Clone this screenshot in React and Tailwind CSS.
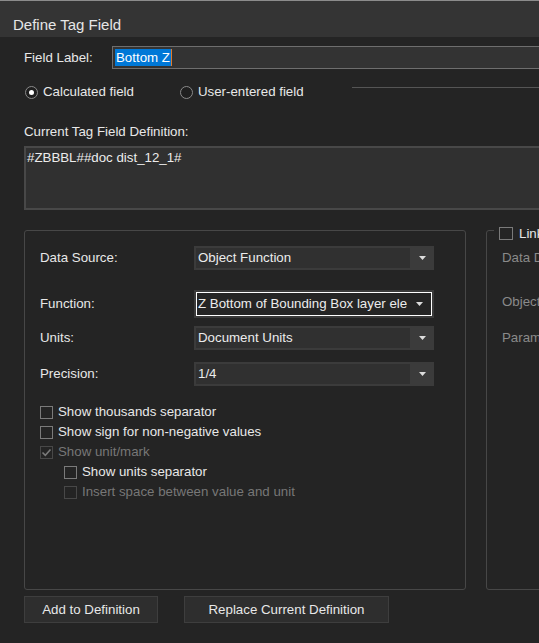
import React from "react";

const font = { fontFamily: '"Liberation Sans", Arial, sans-serif' };

const Arrow = () => (
    <svg width="7" height="4" viewBox="0 0 7 4" className="block">
        <path d="M0 0 L7 0 L3.5 4 Z" fill="#dcdcdc" />
    </svg>
);

const Select = ({ value, focused }) => {
    if (focused) {
        return (
            <div className="w-[240px] h-[28px] shrink-0 bg-[#3a3a3a] p-[2px]">
                <div className="w-full h-full border border-white bg-[#252525] flex items-center">
                    <span className="flex-1 pl-[1px] text-[13.3px] text-[#ececec] whitespace-nowrap overflow-hidden">
                        {value}
                    </span>
                    <div className="w-[24px] h-full flex items-center justify-center">
                        <Arrow />
                    </div>
                </div>
            </div>
        );
    }
    return (
        <div className="w-[240px] h-[24px] shrink-0 bg-[#3b3b3b] flex pl-[2px] py-[2px]">
            <div className="flex-1 bg-[#303030] flex items-center pl-[2px] text-[13.3px] text-[#ececec] whitespace-nowrap">
                {value}
            </div>
            <div className="w-[24px] flex items-center justify-center">
                <Arrow />
            </div>
        </div>
    );
};

const Check = ({ label, checked, disabled, indent }) => (
    <div className={"h-[20px] flex items-center " + (indent ? "pl-[24px]" : "")}>
        <div
            className={
                "w-[13px] h-[13px] shrink-0 border flex items-center justify-center " +
                (disabled ? "border-[#484848]" : "border-[#7a7a7a]")
            }>
            {checked && (
                <svg width="11" height="11" viewBox="0 0 11 11">
                    <path d="M1.5 5.5 L4.3 8.3 L9.5 2.5" stroke="#7a7a7a" strokeWidth="1.6" fill="none" />
                </svg>
            )}
        </div>
        <span
            className={
                "ml-[5px] text-[13.3px] whitespace-nowrap " +
                (disabled ? "text-[#777777]" : "text-[#e8e8e8]")
            }>
            {label}
        </span>
    </div>
);

const Radio = ({ label, checked }) => (
    <div className="flex items-center shrink-0">
        <div className="w-[13px] h-[13px] rounded-full border border-[#8a8a8a] bg-[#1f1f1f] flex items-center justify-center">
            {checked && <div className="w-[5px] h-[5px] rounded-full bg-white" />}
        </div>
        <span className="ml-[5px] text-[13.3px] text-[#e8e8e8] whitespace-nowrap">{label}</span>
    </div>
);

const Row = ({ label, children, className }) => (
    <div className={"flex items-center " + (className || "")}>
        <div className="w-[154px] shrink-0 text-[13.3px] text-[#e8e8e8] whitespace-nowrap">{label}</div>
        {children}
    </div>
);

export default function App() {
    return (
        <div className="w-[539px] h-[643px] overflow-hidden bg-[#242424]" style={font}>
            <div className="h-[37px] bg-[#343434] border-t border-[#8c8c8c] pl-[13px] pt-[12px]">
                <span className="text-[15px] leading-[20px] text-[#e6e6e6]">Define Tag Field</span>
            </div>

            <div className="pl-[24px] flex flex-col">
                <div className="mt-[9px] h-[23px] flex items-center">
                    <div className="w-[88px] shrink-0 text-[13.3px] text-[#e8e8e8]">Field Label:</div>
                    <div className="w-[440px] h-[23px] shrink-0 border border-[#6e6e6e] bg-[#333333] flex items-center pl-[2px]">
                        <span className="bg-[#0078d7] text-white text-[13.3px] leading-[17px] px-[1px]">Bottom Z</span>
                        <span className="w-px h-[17px] bg-[#e07a2a]" />
                    </div>
                </div>

                <div className="mt-[15px] h-[16px] flex items-center pl-[1px]">
                    <Radio label="Calculated field" checked />
                    <div className="ml-[46px]">
                        <Radio label="User-entered field" />
                    </div>
                    <div className="ml-[48px] flex-1 h-px bg-[#555555] self-start mt-[3px]" />
                </div>

                <div className="mt-[22px] h-[16px] text-[13.3px] text-[#e8e8e8]">Current Tag Field Definition:</div>

                <div className="mt-[8px] w-[540px] h-[64px] shrink-0 border-2 border-[#484848] bg-[#303030] px-[1px] pt-[2px] text-[13.3px] leading-[16px] text-[#ececec]">
                    #ZBBBL##doc dist_12_1#
                </div>

                <div className="mt-[20px] flex">
                    <div className="w-[442px] h-[360px] shrink-0 border border-[#474747] rounded-[3px] pl-[15px] pt-[15px]">
                        <Row label="Data Source:">
                            <Select value="Object Function" />
                        </Row>
                        <Row label="Function:" className="mt-[20px]">
                            <Select value="Z Bottom of Bounding Box layer ele" focused />
                        </Row>
                        <Row label="Units:" className="mt-[8px]">
                            <Select value="Document Units" />
                        </Row>
                        <Row label="Precision:" className="mt-[12px]">
                            <Select value="1/4" />
                        </Row>
                        <div className="mt-[16px]">
                            <Check label="Show thousands separator" />
                            <Check label="Show sign for non-negative values" />
                            <Check label="Show unit/mark" checked disabled />
                            <Check label="Show units separator" indent />
                            <Check label="Insert space between value and unit" indent disabled />
                        </div>
                    </div>

                    <div className="relative ml-[20px] w-[120px] h-[360px] shrink-0 border border-[#474747] rounded-[3px] pl-[15px] pt-[19px]">
                        <div className="absolute left-[7px] top-[-7px] bg-[#242424] pl-[5px] flex items-center">
                            <div className="w-[14px] h-[13px] border border-[#7a7a7a]" />
                            <span className="ml-[6px] text-[13.3px] text-[#e8e8e8]">Link</span>
                        </div>
                        <div className="text-[13.3px] text-[#8a8a8a] whitespace-nowrap leading-[16px]">Data Definition:</div>
                        <div className="mt-[28px] text-[13.3px] text-[#8a8a8a] whitespace-nowrap leading-[16px]">Object:</div>
                        <div className="mt-[20px] text-[13.3px] text-[#8a8a8a] whitespace-nowrap leading-[16px]">Parameter:</div>
                    </div>
                </div>

                <div className="mt-[6px] flex">
                    <button className="w-[134px] h-[27px] bg-[#2e2e2e] border border-[#3e3e3e] text-[13.3px] text-[#e8e8e8]">
                        Add to Definition
                    </button>
                    <button className="ml-[26px] w-[205px] h-[27px] bg-[#2e2e2e] border border-[#3e3e3e] text-[13.3px] text-[#e8e8e8]">
                        Replace Current Definition
                    </button>
                </div>
            </div>
        </div>
    );
}
